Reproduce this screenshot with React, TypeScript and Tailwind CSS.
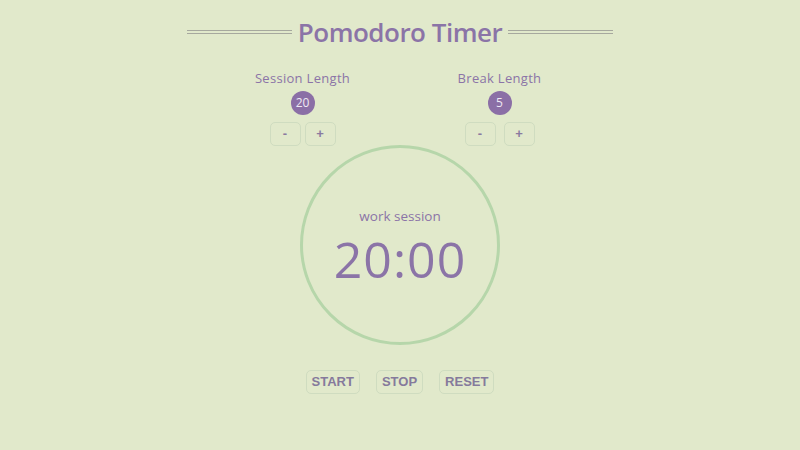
import React, { useState } from "react";

const purple = "text-[#8b74a7]";

function Stepper({ label, value, onDec, onInc, gap }: { label: string; value: number; onDec: () => void; onInc: () => void; gap: string }) {
  return (
    <div className="flex w-[130px] flex-col items-center">
      <div className={`text-[13px] leading-none tracking-[0.3px] ${purple}`}>{label}</div>
      <div className="mt-[6px] flex h-[24px] w-[24px] items-center justify-center rounded-full bg-[#8b6fa6] text-[12px] text-[#efe9f3]">
        {value}
      </div>
      <div className={`mt-[7px] flex ${gap}`}>
        <button onClick={onDec} className="h-[24px] w-[31px] rounded-[5px] border border-[#cfdcc0] text-[13px] font-bold text-[#8a7aa0] [font-family:'Liberation_Sans',sans-serif]">
          -
        </button>
        <button onClick={onInc} className="h-[24px] w-[31px] rounded-[5px] border border-[#cfdcc0] text-[13px] font-bold text-[#8a7aa0] [font-family:'Liberation_Sans',sans-serif]">
          +
        </button>
      </div>
    </div>
  );
}

export default function App() {
  const [session, setSession] = useState(20);
  const [brk, setBrk] = useState(5);

  const ctrl = "h-[24px] rounded-[5px] border border-[#cfdcc0] px-[5px] text-[13px] font-bold text-[#857a9c] [font-family:'Liberation_Sans',sans-serif]";

  return (
    <div className="flex h-[450px] w-[800px] flex-col items-center bg-[#e1e9cb] [font-family:'Open_Sans',Lato,sans-serif]">
      <div className="mt-[14px] flex items-center gap-[6px]">
        <div className="h-[4px] w-[105px] border-y border-[#a6a89e]" />
        <h1 className={`text-[26px] font-semibold leading-[36px] tracking-[-0.5px] ${purple}`}>Pomodoro Timer</h1>
        <div className="h-[4px] w-[105px] border-y border-[#a6a89e]" />
      </div>

      <div className="mt-[22px] flex gap-[67px] pl-[2px]">
        <Stepper label="Session Length" value={session} gap="gap-[4px]" onDec={() => setSession(Math.max(1, session - 1))} onInc={() => setSession(session + 1)} />
        <Stepper label="Break Length" value={brk} gap="gap-[8px]" onDec={() => setBrk(Math.max(1, brk - 1))} onInc={() => setBrk(brk + 1)} />
      </div>

      <div className="mt-[-1px] flex h-[200px] w-[200px] flex-col items-center justify-center rounded-full border-[3px] border-[#b6d6aa]">
        <div className={`mt-[4px] text-[13.5px] leading-none ${purple}`}>work session</div>
        <div className={`mt-[10px] text-[50px] leading-none tracking-[1px] ${purple}`}>
          {String(session).padStart(2, "0")}:00
        </div>
      </div>

      <div className="mt-[25px] flex gap-[16px]">
        <button className={ctrl}>START</button>
        <button className={ctrl}>STOP</button>
        <button className={ctrl}>RESET</button>
      </div>
    </div>
  );
}
